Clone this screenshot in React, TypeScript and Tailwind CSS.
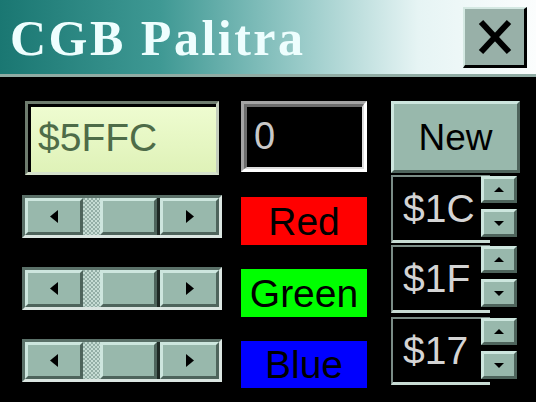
import React from "react";

const sans = { fontFamily: '"Liberation Sans", Arial, sans-serif' };

// raised bevel used by every button face
const bevel =
  "bg-[#98b8ac] border-t-[3px] border-l-[3px] border-b-[3px] border-r-[3px] border-t-[#cde6de] border-l-[#cde6de] border-b-[#4e645c] border-r-[#4e645c]";

function Arrow({ dir }: { dir: "left" | "right" | "up" | "down" }) {
  if (dir === "left")
    return (
      <svg width="8" height="13" viewBox="0 0 8 13">
        <polygon points="8,0 0,6.5 8,13" fill="#000" />
      </svg>
    );
  if (dir === "right")
    return (
      <svg width="8" height="13" viewBox="0 0 8 13">
        <polygon points="0,0 8,6.5 0,13" fill="#000" />
      </svg>
    );
  if (dir === "up")
    return (
      <svg width="10" height="5" viewBox="0 0 10 5">
        <polygon points="0,5 5,0 10,5" fill="#000" />
      </svg>
    );
  return (
    <svg width="10" height="5" viewBox="0 0 10 5">
      <polygon points="0,0 10,0 5,5" fill="#000" />
    </svg>
  );
}

function ScrollBar({ className = "" }: { className?: string }) {
  return (
    <div
      className={`flex w-[200px] h-[43px] border-t-[3px] border-l-[3px] border-b-[3px] border-r-[3px] border-t-[#5a7068] border-l-[#5a7068] border-b-[#dbe6e2] border-r-[#dbe6e2] bg-[#3a4a44] ${className}`}
    >
      <div className={`w-[58px] h-full flex items-center justify-center ${bevel}`}>
        <Arrow dir="left" />
      </div>
      <div className="w-[17px] h-full bg-[repeating-conic-gradient(#c6dcd4_0_25%,#94aea6_0_50%)] bg-[length:4px_4px]" />
      <div className={`w-[57px] h-full ${bevel}`} />
      <div className="w-[3px] h-full bg-[#1e2824]" />
      <div className={`w-[59px] h-full flex items-center justify-center ${bevel}`}>
        <Arrow dir="right" />
      </div>
    </div>
  );
}

function Spinner({ value, className = "" }: { value: string; className?: string }) {
  return (
    <div className={`flex h-[68px] ${className}`}>
      <div
        className="w-[99px] h-full flex items-center pl-[10px] bg-black border-t-[2px] border-l-[2px] border-b-[3px] border-t-[#7a8c86] border-l-[#7a8c86] border-b-[#c8dcd4] text-[#d4d4d4] text-[39px] leading-none"
        style={sans}
      >
        {value}
      </div>
      <div className="relative -ml-[9px] w-[36px] flex flex-col pt-[1px]">
        <div className={`h-[27px] flex items-center justify-center ${bevel}`}>
          <Arrow dir="up" />
        </div>
        <div className={`h-[28px] mt-[6px] flex items-center justify-center ${bevel}`}>
          <Arrow dir="down" />
        </div>
      </div>
    </div>
  );
}

export default function App() {
  return (
    <div className="w-[536px] h-[402px] bg-black overflow-hidden">
      {/* title bar */}
      <div className="relative h-[74px] bg-[linear-gradient(90deg,#1a7772_0%,#3f9994_30%,#9fcecc_58%,#e6f4f4_78%,#fbfdfd_100%)]">
        <div
          className="pl-[10px] pt-[13px] text-[50px] leading-none font-bold tracking-[2.5px] text-[#eefefe]"
          style={{ fontFamily: '"Liberation Serif", "Times New Roman", serif' }}
        >
          CGB Palitra
        </div>
        <div className="absolute left-[463px] top-[7px] w-[64px] h-[61px] flex items-center justify-center bg-[#98b0a8] border-t-[2px] border-l-[2px] border-b-[3px] border-r-[3px] border-t-[#d4e8e2] border-l-[#d4e8e2] border-b-black border-r-black">
          <svg width="36" height="38" viewBox="0 0 36 38">
            <line x1="4" y1="4" x2="32" y2="34" stroke="#000" strokeWidth="6" />
            <line x1="32" y1="4" x2="4" y2="34" stroke="#000" strokeWidth="6" />
          </svg>
        </div>
      </div>
      <div className="h-[3px] bg-[#90aca4]" />

      <div className="flex pt-[24px]">
        {/* left column: colour value and sliders */}
        <div className="ml-[22px] w-[200px] flex flex-col">
          <div className="ml-[3px] w-[194px] h-[74px] border-t-[3px] border-l-[3px] border-b-[3px] border-r-[3px] border-t-[#6e7c6e] border-l-[#6e7c6e] border-b-[#d6e2cc] border-r-[#c4cebc]">
            <div
              className="h-full flex items-center pl-[7px] pb-[4px] bg-[linear-gradient(180deg,#eefcd0,#dff2b8)] border-t-[3px] border-l-[3px] border-t-black border-l-black text-[#4e6c48] text-[39px] leading-none"
              style={sans}
            >
              $5FFC
            </div>
          </div>
          <ScrollBar className="mt-[20px]" />
          <ScrollBar className="mt-[29px]" />
          <ScrollBar className="mt-[29px]" />
        </div>

        {/* middle column: index and channel labels */}
        <div className="ml-[19px] w-[126px] flex flex-col">
          <div className="h-[71px] border-t-[3px] border-l-[3px] border-b-[3px] border-r-[3px] border-t-[#a4a4a4] border-l-[#a4a4a4] border-b-white border-r-white">
            <div
              className="h-full flex items-center pl-[7px] pb-[2px] bg-black border-t-[3px] border-l-[3px] border-b-[2px] border-r-[2px] border-t-[#6c6c6c] border-l-[#6c6c6c] border-b-[#dcdcdc] border-r-[#dcdcdc] text-[#c8c8c8] text-[38px] leading-none"
              style={sans}
            >
              0
            </div>
          </div>
          <div
            className="mt-[25px] h-[48px] flex items-center justify-center bg-[#ff0000] text-black text-[39px] leading-none"
            style={sans}
          >
            Red
          </div>
          <div
            className="mt-[24px] h-[48px] flex items-center justify-center bg-[#00ff00] text-black text-[39px] leading-none"
            style={sans}
          >
            Green
          </div>
          <div
            className="mt-[24px] h-[47px] flex items-center justify-center bg-[#0000ff] text-black text-[39px] leading-none"
            style={sans}
          >
            Blue
          </div>
        </div>

        {/* right column: new button and channel spinners */}
        <div className="ml-[24px] w-[129px] flex flex-col">
          <div
            className={`h-[72px] flex items-center justify-center text-black text-[37px] leading-none ${bevel}`}
            style={sans}
          >
            New
          </div>
          <Spinner value="$1C" className="mt-[2px]" />
          <Spinner value="$1F" className="mt-[2px]" />
          <Spinner value="$17" className="mt-[4px]" />
        </div>
      </div>
    </div>
  );
}
